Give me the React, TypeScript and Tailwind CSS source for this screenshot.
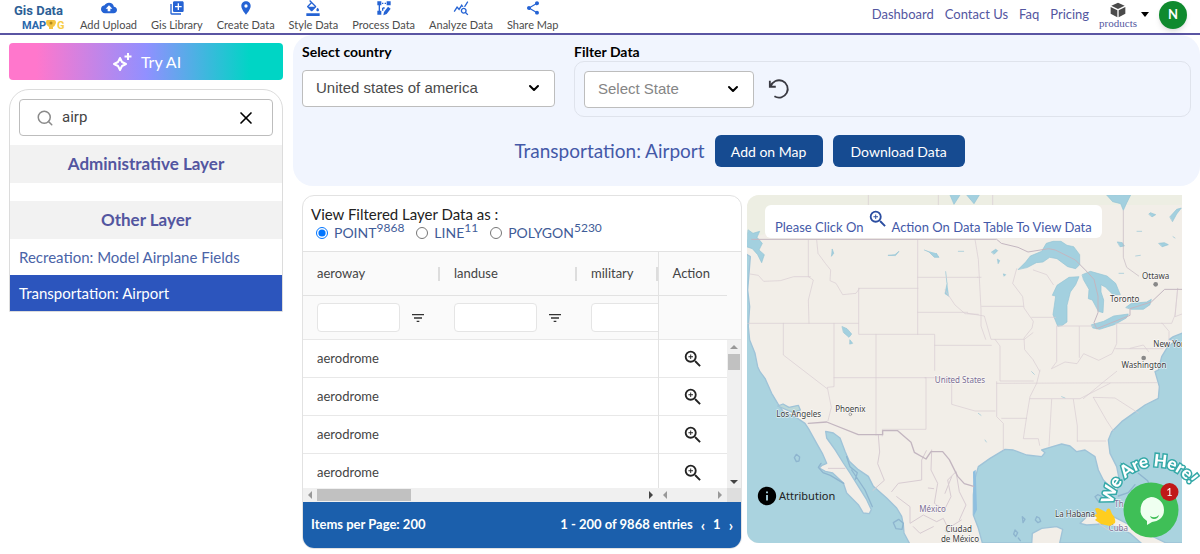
import { useState } from 'react';
import type { ReactNode } from 'react';
import { MdCloudUpload, MdLibraryAdd, MdLocationOn, MdFormatColorFill, MdQueryStats, MdShare, MdZoomIn, MdFilterList, MdInfo } from 'react-icons/md';
import { ChevronDown, Search, X } from 'lucide-react';

function ProcessIcon({ className }: { className?: string }) {
  return (
    <svg viewBox="0 0 24 24" className={className} fill="currentColor">
      <path d="M2 2h6v6H2zM2 16h6v6H2zM16 2h6v6h-6zM4 8h2v8H4zM9 4h2v2H9zM13 4h2v2h-2z" />
      <path d="M10 11h3v2h-3zM9 16v-4h2v4zM18 10l4 3-6 8-5 2 1-5z" />
    </svg>
  );
}

function CubeIcon({ className }: { className?: string }) {
  return (
    <svg viewBox="0 0 24 24" className={className} fill="currentColor">
      <path d="M12 1l10 4.500-10 5-10-5zM1 7.500l10 5V23L1 17.500zM23 7.500V17.500L13 23V12.500z" />
    </svg>
  );
}

const tools = [
  { label: 'Add Upload', icon: MdCloudUpload },
  { label: 'Gis Library', icon: MdLibraryAdd },
  { label: 'Create Data', icon: MdLocationOn },
  { label: 'Style Data', icon: MdFormatColorFill },
  { label: 'Process Data', icon: ProcessIcon },
  { label: 'Analyze Data', icon: MdQueryStats },
  { label: 'Share Map', icon: MdShare },
];

const links = ['Dashboard', 'Contact Us', 'Faq', 'Pricing'];

const geometries = [
  { name: 'POINT', count: 9868 },
  { name: 'LINE', count: 11 },
  { name: 'POLYGON', count: 5230 },
];

const rows = ['aerodrome', 'aerodrome', 'aerodrome', 'aerodrome'];

function Logo() {
  return (
    <a href="#" aria-label="Gis Data home">
      <svg viewBox="0 0 52 32" className="h-8 w-[52px]" fontFamily="Roboto" fontWeight="700">
        <text x="0" y="14" fontSize="13" fill="#2d5f96">Gis Data</text>
        <text x="8" y="28" fontSize="11" fill="#2b68ac">MAP</text>
        <path d="M33 19h7q2 0 2 3-1 3-3 4v2h-4v-2q-3-2-3-4 0-3 1-3z" fill="#f4c542" />
        <circle cx="37" cy="22" r="1.500" fill="#b48a1d" />
        <text x="43" y="28" fontSize="11" fill="#f7ce46">G</text>
      </svg>
    </a>
  );
}

function Header() {
  return (
    <header className="flex h-[35px] items-center justify-between border-b-2 border-[#5a55a3] bg-white pr-[13px] pl-[14px]">
      <div className="flex items-center gap-[14px]">
        <Logo />
        <nav className="flex gap-[14px]">
          {tools.map(({ label, icon: Icon }) => (
            <a key={label} href="#" className="flex flex-col items-center gap-px text-[11px] leading-4 text-[#4c4c4c]">
              <Icon className="h-4 w-4 text-[#2563d4]" />
              {label}
            </a>
          ))}
        </nav>
      </div>
      <div className="flex items-center gap-[10px] pb-1">
        <nav className="flex gap-[11px] text-[13px] text-[#5356a0]">
          {links.map((link) => (
            <a key={link} href="#">{link}</a>
          ))}
        </nav>
        <button className="flex items-center gap-1">
          <span className="flex flex-col items-center font-['Liberation_Serif'] text-[11px] leading-[10px] text-[#5356a0]">
            <CubeIcon className="h-4 w-4 text-[#4a4a4a]" />
            products
          </span>
          <svg viewBox="0 0 8 5" className="h-[5px] w-2"><path d="M0 0h8L4 5z" /></svg>
        </button>
        <button className="h-7 w-7 rounded-full bg-[#0f8a2e] text-[13px] font-bold text-white shadow-md">N</button>
      </div>
    </header>
  );
}

function Sidebar() {
  const [query, setQuery] = useState('airp');

  return (
    <aside className="w-[274px] shrink-0 pt-2">
      <button className="flex h-[37px] w-full items-center justify-center gap-2 rounded bg-linear-to-r/srgb from-[#ff77cc] from-10% via-[#9190ff] via-50% to-[#00d5c5] to-88% text-[16px] text-white">
        <svg viewBox="0 0 22 20" className="h-5 w-[22px]" fill="none" stroke="white" strokeWidth="2" strokeLinejoin="round">
          <path d="M9 6l2 4 4 2-4 2-2 4-2-4-4-2 4-2z" />
          <path d="M17 1v7M13.500 4.500h7" />
        </svg>
        Try AI
      </button>
      <div className="mt-[9px] rounded-t-[20px] border border-[#dcdcdc]">
        <div className="m-[9px] flex h-[37px] items-center rounded border border-[#bdbdbd] px-4">
          <Search className="h-[18px] w-[18px] shrink-0 text-[#8a8a8a]" aria-hidden="true" />
          <input
            aria-label="Search layers"
            value={query}
            onChange={(e) => setQuery(e.target.value)}
            className="ml-2 w-full min-w-0 font-['Roboto'] text-[15px] text-[#444] outline-none"
          />
          <button aria-label="Clear search" onClick={() => setQuery('')}>
            <X className="h-5 w-5 text-black" />
          </button>
        </div>
        <h2 className="bg-[#f2f2f2] text-center text-[17px] leading-[38px] font-bold text-[#5356a0]">Administrative Layer</h2>
        <h2 className="mt-[18px] bg-[#f2f2f2] text-center text-[17px] leading-[38px] font-bold text-[#5356a0]">Other Layer</h2>
        <ul className="text-[15px] leading-9">
          <li><button className="w-full pl-[9px] text-left text-[#4a64a8]">Recreation: Model Airplane Fields</button></li>
          <li><button className="w-full bg-[#2c55bd] pl-[9px] text-left text-white">Transportation: Airport</button></li>
        </ul>
      </div>
    </aside>
  );
}

function Dropdown({ id, children }: { id: string; children: ReactNode }) {
  return (
    <div className="relative">
      <select
        id={id}
        className="h-[37px] w-full appearance-none rounded border border-[#bdbdbd] bg-white px-[13px] font-['Liberation_Sans'] text-[15px] text-[#4a4a4a] invalid:text-[#858585]"
        required
      >
        {children}
      </select>
      <ChevronDown className="pointer-events-none absolute top-[10px] right-[13px] h-4 w-4 text-black" strokeWidth={3} />
    </div>
  );
}

function FilterPanel() {
  return (
    <section className="rounded-[20px] bg-[#f1f5fe] px-[9px] pt-2 pb-[19px]">
      <div className="flex gap-[19px]">
        <div className="w-[253px]">
          <label htmlFor="country" className="block h-[27px] text-[14px] leading-[18px] font-bold text-black">Select country</label>
          <Dropdown id="country">
            <option>United states of america</option>
          </Dropdown>
        </div>
        <div className="flex-1">
          <label htmlFor="state" className="block text-[14px] leading-[18px] font-bold text-black">Filter Data</label>
          <div className="flex h-14 items-center gap-[14px] rounded-[10px] border border-[#dfe3ec] px-[9px]">
            <div className="w-[170px]">
              <Dropdown id="state">
                <option value="">Select State</option>
              </Dropdown>
            </div>
            <button aria-label="Reset filters">
              <svg viewBox="0 0 24 24" className="h-[22px] w-[22px]" fill="none" stroke="#3a3a42" strokeWidth="2">
                <path d="M3 9a9.500 9.500 0 1 1 4 11M2 3v6.500h6.500" />
              </svg>
            </button>
          </div>
        </div>
      </div>
      <div className="mt-[18px] flex items-center justify-center gap-[10px] pr-[14px]">
        <h1 className="text-[19px] text-[#4459a8]">Transportation: Airport</h1>
        <button className="h-8 w-[108px] rounded-md bg-[#164b91] text-[14px] text-white">Add on Map</button>
        <button className="h-8 w-[132px] rounded-md bg-[#164b91] text-[14px] text-white">Download Data</button>
      </div>
    </section>
  );
}

function Arrow({ d, dark }: { d: string; dark?: boolean }) {
  return <svg viewBox="0 0 14 14" className="h-[14px] w-[14px] shrink-0"><path d={d} fill={dark ? '#444' : '#999'} /></svg>;
}

function DataTable() {
  const [geometry, setGeometry] = useState('POINT');

  return (
    <section className="overflow-hidden rounded-xl border border-[#e2e2e2] bg-white">
      <div role="radiogroup" aria-label="Geometry type" className="h-[55px] px-2 pt-2">
        <p className="text-[15px] leading-5 text-[#222]">View Filtered Layer Data as :</p>
        <div className="flex gap-3 pl-[5px]">
          {geometries.map(({ name, count }) => (
            <label key={name} className="flex items-center gap-[6px] text-[14px] leading-[18px] text-[#3f5c98]">
              <input type="radio" name="geometry" checked={geometry === name} onChange={() => setGeometry(name)} className="h-3 w-3" />
              <span>{name}<sup className="text-[12px]">{count}</sup></span>
            </label>
          ))}
        </div>
      </div>
      <div className="h-[237px] overflow-hidden">
        <table className="w-full table-fixed border-collapse text-left text-[13px] text-[#444]">
          <colgroup>
            <col className="w-[137px]" />
            <col className="w-[137px]" />
            <col />
            <col className="w-[69px]" />
            <col className="w-[14px]" />
          </colgroup>
          <thead className="bg-[#fafafa]">
            <tr className="h-11 border-t border-[#e2e2e2]">
              {['aeroway', 'landuse', 'military'].map((name) => (
                <th key={name} className="border-b border-[#e2e2e2] pl-[14px] font-normal">
                  <span className="flex justify-between">
                    {name}
                    <span className="h-[14px] w-[2px] self-center bg-[#ddd]" />
                  </span>
                </th>
              ))}
              <th className="border-b border-l border-[#e2e2e2] pl-[14px] font-normal">Action</th>
              <th />
            </tr>
            <tr className="h-11">
              {['aeroway', 'landuse', 'military'].map((name) => (
                <td key={name} className="overflow-hidden pl-[14px]">
                  <span className="flex items-center gap-[10px]">
                    <input aria-label={`Filter ${name}`} className="h-[29px] w-[83px] shrink-0 rounded border border-[#e5e5e5] bg-white px-2" />
                    <button aria-label={`${name} filter options`}><MdFilterList className="h-4 w-4 text-[#333]" /></button>
                  </span>
                </td>
              ))}
              <td className="border-l border-[#e2e2e2]" />
              <td />
            </tr>
          </thead>
          <tbody>
            {rows.map((value, i) => (
              <tr key={i} className="h-[38px] border-t border-[#e8e8e8]">
                <td className="pl-[14px]">{value}</td>
                <td />
                <td />
                <td className="border-l border-[#e2e2e2]">
                  <button aria-label="View on map" className="mx-auto block"><MdZoomIn className="h-[22px] w-[22px] text-[#222]" /></button>
                </td>
                {i === 0 && (
                  <td rowSpan={4} className="bg-[#f0f0f0] p-0 align-top">
                    <div className="flex h-[149px] flex-col">
                      <Arrow d="M3 9h8L7 5z" />
                      <div className="mx-px h-4 bg-[#c1c1c1]" />
                      <div className="mt-auto h-[14px]"><Arrow d="M3 5h8l-4 4z" dark /></div>
                    </div>
                  </td>
                )}
              </tr>
            ))}
          </tbody>
        </table>
      </div>
      <div className="flex h-[14px] bg-[#f0f0f0]">
        <Arrow d="M9 3v8L5 7z" />
        <div className="my-px w-[94px] bg-[#c1c1c1]" />
        <div className="ml-auto"><Arrow d="M5 3v8l4-4z" dark /></div>
        <div className="flex w-[69px] justify-between"><Arrow d="M9 3v8L5 7z" /><Arrow d="M5 3v8l4-4z" /></div>
        <div className="w-[14px] bg-[#dedede]" />
      </div>
      <footer className="flex h-[46px] items-center justify-between bg-[#1b5fac] px-2 text-[13px] font-bold text-white">
        <span>Items per Page: 200</span>
        <div className="flex items-center gap-2">
          <span>1 - 200 of 9868 entries</span>
          <button aria-label="Previous page" className="text-[15px]">‹</button>
          <span>1</span>
          <button aria-label="Next page" className="text-[15px]">›</button>
        </div>
      </footer>
    </section>
  );
}

const land = '#f2eee8';
const water = '#aad3df';

const mapLabels = [
  { text: 'Ottawa', x: 1232, y: 268 },
  { text: 'Toronto', x: 1139, y: 335 },
  { text: 'New York', x: 1278, y: 471 },
  { text: 'Washington', x: 1197, y: 535 },
  { text: 'Los Angeles', x: 161, y: 682 },
  { text: 'Phoenix', x: 316, y: 665 },
  { text: 'La Habana', x: 990, y: 980 },
  { text: 'Ciudad', x: 641, y: 1027 },
  { text: 'de México', x: 645, y: 1056 },
];

const countryLabels = [
  { text: 'United States', x: 645, y: 578 },
  { text: 'México', x: 563, y: 967 },
  { text: 'Cuba', x: 1120, y: 1022 },
  { text: 'Th', x: 1122, y: 950 },
];

function MapDrawing() {
  return (
    <svg viewBox="6 15 1305 1044" className="block w-full" strokeLinejoin="round" strokeLinecap="round" role="img" aria-label="Map of the United States">
      <rect x="6" y="15" width="1305" height="1044" fill={land} />
      <path d="M6 15H1311V45H900L700 80 330 65 6 145z" fill="#e9eee0" opacity=".6" />

      {/* oceans */}
      <g fill={water} stroke="#9fc3d8" strokeWidth="4">
        <path d="M0 190l16 10-4 50-4 50 6 50-4 60 4 40 16 40 8 40 7 15 15 20 20 45 18 30 17 25 35 15 30 20 10 15 25 45 17 30 13 30-14 6-8 8 18 10 22 5 32 30 10 30 35 35 15 25 18 2 6-12-14-30-25-40-25-40-20-30-25-40-25-35-3-20 23 5 20 15 15 40 13 30 27 25 30 20 15 30 40 35 30 30 15 25 5 25 2 25 18 34H0z" />
        <path d="M1316 428l-31 12-12 8 18 4-26 23-15 25-10 40-10 5 13 45-3 35-40 20-35 25-35 25-30 30-10 25 5 40 20 40 10 50-10 25-20-15-20-20-15-30-10-40-30-20-25 5-20-17-25-6-35 10-25 8 10 8-10 12-45-5-40-15-25-2-45 27-35 25-10 35-5 50 0 60 15 40 12 44H1316z" />
      </g>
      <g fill="none" stroke="#8eb5cf" strokeWidth="4">
        <path d="M228 820l-8 12 14 16 22 8 40 24M305 800l10 30 22 18-6 20M445 998l16-10 14 12-4 18-18-2zM154 793l10 8-2 12-8 2-6-12zM320 840l40 60 22 50" />
        <path d="M1050 920l8-6 10 4 2 10-10 6zM875 980l8 4 4 10-8 4-8-8zM832 980l8 8-6 10zM810 1020l8 8-6 12-6-8zM820 1044l6 8M1180 850l28 22 12 30-16 20M1120 918l30-10 20-24" />
      </g>
      <g fill={land} stroke="#9fc3d8" strokeWidth="4">
        <path d="M860 1064l2-34 28-15 45-5 18 8-10 46zM1005 1000l20-20 30-10 50 10 40 20 50 25 40 20 40 20h-80l-40-35-40-20-40-8-50 3z" />
        <path d="M98 648l16-6 18 10 28-6 6 14-22 8z" fill="#bcd8d8" />
      </g>

      {/* lakes and sounds */}
      <g fill="#a3d0df" stroke="#94c4d4" strokeWidth="2">
        <path d="M820 238l22-22 14-18 34-14 14-24 20-6 24 0 18 12 20 4 18 24 0 30-12 12-24-6-32-24-22-4-20 14-20 2-26 14z" />
        <path d="M938 408l-14-34 8-56-10-2 14-30 36-24 30-2-10 24-16 22-10 40 0 50-14 10z" />
        <path d="M1012 254l24-10 50 14 26 22 14 34-22 0-22-22-14-8 0 22 8 24-2 38-14-4-18-34-12-4 2-28-16-28z" />
        <path d="M1040 404l36-10 30-16 44-6-6 12-36 20-44 14-20-4zM1143 352l16-12 46-4 14-8-4 16-20 14-36 0z" />
        <path d="M1085 15l18 20 24 6 8 20 10-22 12-24zM615 15l12 28 18-28M665 15l22 26 16-26" />
        <path d="M10 120l14 10 20-6-8 18 16 18-10 20 16 14-8 24-12-24-16-18-18-6z" />
        <path d="M292 410l14 6 14 16-8 10-16-14zM315 450l8 10-8 2zM262 178l4 12-6 8zM430 196l20-2 12-10-10 12zM538 180l14 6 16 16 14 0-8-12M640 184l16 0M602 245l4 36-6 30 12 8" />
        <path d="M740 186l12-8 6 4-10 10zM758 208l6 4-4 8zM776 252l6 2-4 4zM1275 80l20-22 14-4-14 18-12 22zM1212 72l4-4 16 6-10 6zM1176 124l14 0M1118 156l14 2 6 10-12 2zM1242 160l16-2 12 6-18 6zM1172 198l14-2M1122 250l14 0M1284 140l6 4" />
        <path d="M600 1022l10 6M700 670l8 6M720 750l4 6M860 545l8 8M950 620l10 4" />
      </g>
      <path d="M684 845l8-6 4 120-10 20z" fill="#8ebfe0" />

      {/* states */}
      <g fill="none" stroke="#d8ccd2" strokeWidth="2">
        <path d="M190 150v110l15 10-15 60 2 70M15 252l25 4 16 18 50-2 40-12 50 0M6 400h334M115 400v95l130 100M267 400v190l-20 2 12 60-10 40" />
        <path d="M215 150l4 40 22 30 16 20-2 32 18 8 20 34 40-4 10-14M341 295v138h228v108M341 295h178M518 150v283M393 433v303M518 262h180M518 367h150M600 300l30 45 30 26 40 2M569 466h170M267 563h275M543 563v155H412v20M540 563h80v80l70 20h60" />
        <path d="M370 15v40M580 15v40M743 15v30M690 148l10 60 8 150 0 50 14 40M698 262h10M710 349h125M668 370l50 8 20 70h100l26-20M750 448l15 20v105h100M755 575v105l20 20 0 80M770 685h75M815 236l-12 44 30 40 4 34 28 40-4 20-24 30 2 35 25 30 20 35M860 382h72M865 240l40 14 20 30M935 410v105l-15 20M935 408h110M1003 410v92M920 536l40-20 36 5 20-30 45 20 40-20 14-30v-60M1112 400h140l20 24 0 40-20 12H1112M1250 400l30 0 10-25 8-80M1298 295l-8 85 21-8M1155 475l40-10 16 20" />
        <path d="M885 540l-10 40-20 40-10 60-10 66h45l4 20M755 580l480-2M855 626h150l90-46M920 628l-8 140M985 628l12 80v46M997 753h85M1045 622l40 70 20 30M1045 622l65 2 70 45M1015 626l60-50 40-32" />
        <path d="M400 736l4 50-6 35 20 50-34 30M440 905l20-25 70-10 0-60 14-28M560 780l-2 60 20 40-10 60 30 20 20-40-10-50 25-25 10 60 20 40-20 45M455 920l40 30 0 50 40-25 40 20 20-10 14 30 40-25M505 1010l20 20 40-20M620 860l-20 50M550 894l16 2M250 835h50M1060 1000l30 20" strokeWidth="3" />
      </g>

      {/* national borders */}
      <g fill="none" stroke="#c3b6c0" strokeWidth="4">
        <path d="M20 148H755l14 12 50 12 30 14 62-10 20 4 60 30 30 30 26 28 12 50 0 50-12 30 8 18 100-40 0-20 64-20 40-38h52" strokeWidth="3" />
        <path d="M1135 62v140l10 30 36 26" strokeWidth="2" />
        <path d="M190 700l55-4 95 38h73v-12h45l40 35 10 30 35 20 15-22h35l20 24 25 50 20 22 28 8" />
      </g>
      <g fill="#888">
        <circle cx="1232" cy="283" r="7" />
        <circle cx="1196" cy="504" r="7" />
        <circle cx="316" cy="673" r="4" fill="none" stroke="#888" strokeWidth="2" />
      </g>
      <g fontFamily="Noto Sans, sans-serif" fontSize="24" textAnchor="middle" stroke="#ffffffaa" strokeWidth="4" style={{ paintOrder: 'stroke' }}>
        <g fill="#3d3d3d">{mapLabels.map((l) => <text key={l.text} x={l.x} y={l.y}>{l.text}</text>)}</g>
        <g fill="#7a6d93">{countryLabels.map((l) => <text key={l.text} x={l.x} y={l.y}>{l.text}</text>)}</g>
      </g>
    </svg>
  );
}

function MapView() {
  return (
    <section className="relative self-start overflow-hidden rounded-l-xl">
      <MapDrawing />
      <p className="absolute top-[10px] left-[18px] flex h-[33px] items-end gap-[3px] rounded-md bg-white px-[10px] text-[13px] leading-[22px] whitespace-nowrap text-[#4459a8]">
        Please Click On
        <MdZoomIn className="mb-2 h-[22px] w-[22px] text-[#2b4da0]" />
        Action On Data Table To View Data
      </p>
      <button className="absolute bottom-9 left-[9px] flex items-center gap-px font-['Noto_Sans'] text-[11px] text-[#222]">
        <MdInfo className="h-[22px] w-[22px] text-black" />
        Attribution
      </button>
    </section>
  );
}

function ChatWidget() {
  return (
    <button aria-label="Open chat" className="fixed right-0 bottom-3 h-[92px] w-[112px]">
      <svg viewBox="1088 450 112 92" className="h-full w-full overflow-visible">
        <defs>
          <path id="chat-arc" d="M1113 505A42 42 0 0 1 1197 512" />
        </defs>
        <circle cx="1151" cy="510" r="27.500" fill="#3fbf57" />
        <path d="M1151 497a13 13 0 0 1 13 13q0 6-4 9-4 3-8 3l-5 3v-4a13 13 0 0 1 4-24z" fill="#effff0" />
        <path d="M1150 516q5 3 9-1-1 4-5 4-3 0-4-3z" fill="#3fbf57" />
        <circle cx="1169.500" cy="492" r="9" fill="#c01818" />
        <text x="1169.500" y="496" textAnchor="middle" fontSize="11" fill="white" fontFamily="Lato">1</text>
        <path d="M1095 509q2-2 5 0l6 3q1-5 4-3l2 5q4 4 3 9l-5 3-9-2-6-4 2-2-3-3 3-1z" fill="#ffcd1f" />
        <text fontSize="17" fontWeight="900" fill="white" stroke="#35a9a8" strokeWidth="3" fontFamily="Lato" style={{ paintOrder: 'stroke' }}>
          <textPath href="#chat-arc">We Are Here!</textPath>
        </text>
      </svg>
    </button>
  );
}

export default function App() {
  return (
    <div className="bg-white font-['Lato',sans-serif]">
      <Header />
      <div className="flex gap-[10px] pl-[9px]">
        <Sidebar />
        <main className="min-w-0 flex-1">
          <FilterPanel />
          <div className="mt-[9px] grid grid-cols-[440fr_435fr] gap-[5px] pr-[18px] pl-[9px]">
            <DataTable />
            <MapView />
          </div>
        </main>
      </div>
      <ChatWidget />
    </div>
  );
}
